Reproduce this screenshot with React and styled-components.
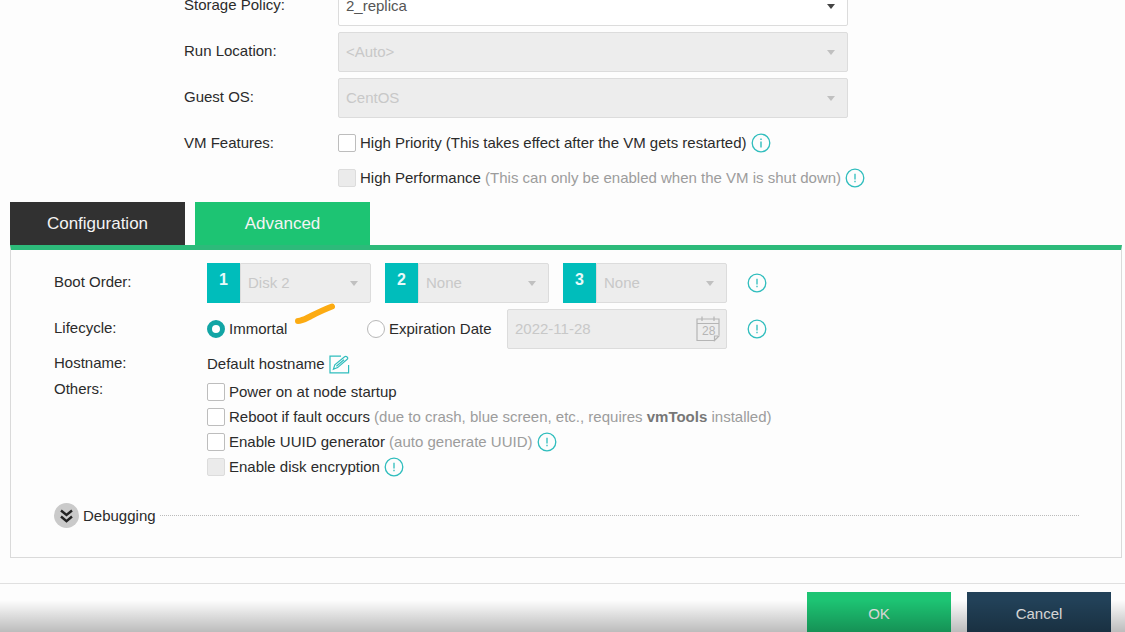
import React, { useState } from 'react';
import styled, { createGlobalStyle } from 'styled-components';

const GlobalStyle = createGlobalStyle`
  * {
    box-sizing: border-box;
  }
  body {
    margin: 0;
    background: #fdfdfd;
    color: #2b2b2b;
    font-family: "Liberation Sans", Arial, sans-serif;
    font-size: 15px;
    line-height: 20px;
  }
  button, input, select {
    font: inherit;
  }
`;

const Dialog = styled.div`
  position: relative;
  height: 100vh;
  overflow: hidden;
`;

const General = styled.section`
  display: flex;
  flex-direction: column;
  gap: 6px;
  margin-top: -14px;
  padding: 0 277px 7px 184px;
`;

const Row = styled.div`
  display: grid;
  grid-template-columns: ${({ $inner }) => ($inner ? '153px' : '154px')} 1fr;
  align-items: ${({ $top }) => ($top ? 'start' : 'center')};
  min-height: ${({ $compact }) => ($compact ? '25px' : '40px')};
`;

const RowLabel = styled.label`
  padding-bottom: 2px;
  line-height: ${({ $compact }) => ($compact ? '24px' : '38px')};
`;

const SelectBox = styled.div`
  position: relative;
  flex: 1;
  min-width: 0;
  color: ${({ $off }) => ($off ? '#c0c0c0' : '#444')};
  select {
    appearance: none;
    display: block;
    width: 100%;
    height: 40px;
    padding: 0 30px 0 7px;
    border: 1px solid #dcdcdc;
    border-radius: ${({ $joined }) => ($joined ? '0 2px 2px 0' : '2px')};
    background: ${({ $off }) => ($off ? '#ededed' : '#fff')};
    color: ${({ $off }) => ($off ? '#c8c8c8' : '#555')};
    opacity: 1;
  }
  &::after {
    content: '';
    position: absolute;
    right: 13px;
    top: 18px;
    border: 4px solid transparent;
    border-top: 5px solid currentColor;
    border-bottom: 0;
    pointer-events: none;
  }
`;

const Features = styled.div`
  padding-top: ${({ $flush }) => ($flush ? '2px' : '1px')};
`;

const CheckRow = styled.div`
  display: flex;
  align-items: center;
  gap: 4px;
  height: ${({ $tall }) => ($tall ? '35px' : '25px')};
  white-space: nowrap;
  label {
    display: flex;
    align-items: center;
    gap: 4px;
  }
`;

const Checkbox = styled.input`
  appearance: none;
  width: 18px;
  height: 18px;
  margin: 0;
  border: 1px solid #bdbdbd;
  border-radius: 2px;
  background: #fff;
  &:checked {
    background: #12a5a5;
  }
  &:disabled {
    border-color: #dcdcdc;
    background: #ebebeb;
  }
`;

const Note = styled.span`
  color: #9c9c9c;
  b {
    color: #777;
  }
`;

const IconButton = styled.button`
  display: flex;
  padding: 0;
  border: 0;
  background: none;
  color: #2fbdbd;
  cursor: pointer;
`;

const TabBar = styled.div`
  display: flex;
  gap: 10px;
  margin: 0 3px 0 10px;
`;

const Tab = styled.button`
  width: 175px;
  height: 43px;
  padding: 0;
  border: 0;
  background: ${({ $active }) => ($active ? '#1dc473' : '#313131')};
  color: #f4f4f4;
  font-size: 17px;
`;

const Panel = styled.section`
  margin: 0 3px 0 10px;
  padding: 13px 42px 29px 43px;
  border: 1px solid #dadada;
  border-top: 5px solid #2dba7a;
`;

const Fields = styled.div`
  display: flex;
  flex-direction: column;
  gap: 6px;
  margin-bottom: 2px;
`;

const Inline = styled.div`
  display: flex;
  align-items: center;
  gap: ${({ $gap }) => $gap || 0}px;
`;

const BootItem = styled.div`
  display: flex;
  width: 164px;
  height: 40px;
`;

const BootNumber = styled.label`
  width: 33px;
  background: #00bdbb;
  color: #e8fafa;
  font-size: 16px;
  font-weight: bold;
  line-height: 34px;
  text-align: center;
`;

const HintSlot = styled.div`
  display: flex;
  padding-left: 20px;
`;

const RadioLabel = styled.label`
  display: flex;
  align-items: center;
  gap: 4px;
  width: ${({ $wide }) => ($wide ? '160px' : '140px')};
  white-space: nowrap;
`;

const Radio = styled.input`
  appearance: none;
  width: 18px;
  height: 18px;
  margin: 0;
  border: 1px solid #b8b8b8;
  border-radius: 50%;
  background: #fff;
  &:checked {
    border: 5px solid #12a5a5;
  }
`;

const DateBox = styled.div`
  display: flex;
  align-items: center;
  width: 220px;
  height: 40px;
  padding: 0 6px 0 7px;
  border: 1px solid #dcdcdc;
  border-radius: 2px;
  background: #ededed;
  color: #b5b5b5;
  input {
    flex: 1;
    min-width: 0;
    padding: 0;
    border: 0;
    background: none;
    color: #c8c8c8;
  }
`;

const Debugging = styled.div`
  display: flex;
  align-items: center;
  margin-top: 24px;
  &::after {
    content: '';
    flex: 1;
    margin-left: 4px;
    border-top: 1px dotted #bbb;
  }
`;

const DebugToggle = styled.button`
  display: flex;
  align-items: center;
  gap: 4px;
  padding: 0;
  border: 0;
  background: none;
  color: inherit;
`;

const Footer = styled.footer`
  display: flex;
  justify-content: flex-end;
  gap: 16px;
  margin-top: 25px;
  padding: 8px 14px;
  border-top: 1px solid #e0e0e0;
`;

const Action = styled.button`
  width: 144px;
  height: 44px;
  border: 0;
  background: ${({ $primary }) => ($primary ? '#1dc473' : '#224158')};
  color: #f0f0f0;
`;

const Shade = styled.div`
  position: absolute;
  right: 0;
  bottom: 0;
  left: 0;
  height: 32px;
  background: linear-gradient(rgba(0, 0, 0, 0), rgba(0, 0, 0, 0.26));
  pointer-events: none;
`;

const Marker = styled.svg`
  position: absolute;
  top: -14px;
  left: 86px;
  pointer-events: none;
`;

const Anchor = styled.div`
  position: relative;
`;

const Hint = ({ info }) => (
  <IconButton type="button" aria-label={info ? 'Information' : 'Notice'}>
    <svg width="20" height="20" viewBox="0 0 20 20" fill="none" stroke="currentColor">
      <circle cx="10" cy="10" r="8.8" strokeWidth="1.3" />
      {info ? (
        <path d="M10 8.4v6M10 5.6v1.5" strokeWidth="1.4" />
      ) : (
        <path d="M10 5.8v5.6M10 12.8v1.5" strokeWidth="1.3" />
      )}
    </svg>
  </IconButton>
);

const EditIcon = () => (
  <svg width="21" height="19" viewBox="0 0 21 19" fill="none" stroke="currentColor" strokeWidth="1.2">
    <path d="M12 1.2H1v16.6h18.6V10" />
    <path d="M4.4 14.2l1.4-4.4L15.6 1.8c.9-.7 1.7-.5 2.5.2s.9 1.6.1 2.3L8.6 12.6zM7.4 11.2l7.6-6.4" />
  </svg>
);

const CalendarIcon = () => (
  <svg width="24" height="26" viewBox="0 0 24 26" fill="none" stroke="currentColor" strokeWidth="1.2">
    <path d="M23 19V3H1v21.5h17.5M1 7.5h22M6 .5V5M18 .5V5M18.5 24.5V20H23zM18.5 24.5L23 20" />
    <text x="6" y="19" fill="currentColor" stroke="none" fontSize="12">28</text>
  </svg>
);

const ChevronsIcon = () => (
  <svg width="25" height="25" viewBox="0 0 25 25" fill="none" stroke="#222" strokeWidth="2.4">
    <circle cx="12.5" cy="12.5" r="12.5" fill="#cacaca" stroke="none" />
    <path d="M7 7.5l5.5 4.5L18 7.5M7 13.5l5.5 4.7L18 13.5" />
  </svg>
);

const Dropdown = ({ id, value, off, joined }) => (
  <SelectBox $off={off} $joined={joined}>
    <select id={id} disabled={off} defaultValue={value}>
      <option>{value}</option>
    </select>
  </SelectBox>
);

const Check = ({ label, note, disabled, tall, children }) => (
  <CheckRow $tall={tall}>
    <label>
      <Checkbox type="checkbox" disabled={disabled} />
      <span>{label}{note && <Note> {note}</Note>}</span>
    </label>
    {children}
  </CheckRow>
);

const general = [
  { id: 'storage', label: 'Storage Policy:', value: '2_replica' },
  { id: 'location', label: 'Run Location:', value: '<Auto>', off: true },
  { id: 'guest', label: 'Guest OS:', value: 'CentOS', off: true },
];

const bootOrder = ['Disk 2', 'None', 'None'];

const App = () => {
  const [lifecycle, setLifecycle] = useState('immortal');

  return (
    <Dialog>
      <GlobalStyle />
      <General>
        {general.map(({ id, label, value, off }) => (
          <Row key={id}>
            <RowLabel htmlFor={id}>{label}</RowLabel>
            <Dropdown id={id} value={value} off={off} />
          </Row>
        ))}
        <Row $top>
          <RowLabel as="span">VM Features:</RowLabel>
          <Features>
            <Check tall label="High Priority (This takes effect after the VM gets restarted)">
              <Hint info />
            </Check>
            <Check tall disabled label="High Performance" note="(This can only be enabled when the VM is shut down)">
              <Hint />
            </Check>
          </Features>
        </Row>
      </General>

      <TabBar role="tablist">
        <Tab type="button" role="tab" aria-selected="false">Configuration</Tab>
        <Tab type="button" role="tab" aria-selected="true" $active>Advanced</Tab>
      </TabBar>
      <Panel>
        <Fields>
          <Row $inner>
            <RowLabel as="span">Boot Order:</RowLabel>
            <Inline>
              <Inline $gap={14}>
                {bootOrder.map((device, i) => (
                  <BootItem key={i}>
                    <BootNumber htmlFor={`boot${i}`}>{i + 1}</BootNumber>
                    <Dropdown id={`boot${i}`} value={device} off joined />
                  </BootItem>
                ))}
              </Inline>
              <HintSlot><Hint /></HintSlot>
            </Inline>
          </Row>
          <Row $inner>
            <RowLabel as="span">Lifecycle:</RowLabel>
            <Anchor>
              <Inline>
                <RadioLabel $wide>
                  <Radio
                    type="radio"
                    name="lifecycle"
                    checked={lifecycle === 'immortal'}
                    onChange={() => setLifecycle('immortal')}
                  />
                  Immortal
                </RadioLabel>
                <RadioLabel>
                  <Radio
                    type="radio"
                    name="lifecycle"
                    checked={lifecycle === 'expires'}
                    onChange={() => setLifecycle('expires')}
                  />
                  Expiration Date
                </RadioLabel>
                <DateBox>
                  <input type="text" aria-label="Expiration Date" defaultValue="2022-11-28" disabled />
                  <CalendarIcon />
                </DateBox>
                <HintSlot><Hint /></HintSlot>
              </Inline>
              <Marker width="44" height="32" viewBox="0 0 44 32" fill="none">
                <path d="M5 26c4 0 7-2 13-5s13-6.500 21-9.500" stroke="#fcab12" strokeWidth="6" strokeLinecap="round" />
              </Marker>
            </Anchor>
          </Row>
        </Fields>
        <Row $inner $compact>
          <RowLabel as="span" $compact>Hostname:</RowLabel>
          <Inline $gap={4}>
            Default hostname
            <IconButton type="button" aria-label="Edit hostname"><EditIcon /></IconButton>
          </Inline>
        </Row>
        <Row $inner $compact $top>
          <RowLabel as="span" $compact>Others:</RowLabel>
          <Features $flush>
            <Check label="Power on at node startup" />
            <Check
              label="Reboot if fault occurs"
              note={<>(due to crash, blue screen, etc., requires <b>vmTools</b> installed)</>}
            />
            <Check label="Enable UUID generator" note="(auto generate UUID)"><Hint /></Check>
            <Check disabled label="Enable disk encryption"><Hint /></Check>
          </Features>
        </Row>
        <Debugging>
          <DebugToggle type="button"><ChevronsIcon />Debugging</DebugToggle>
        </Debugging>
      </Panel>

      <Footer>
        <Action type="button" $primary>OK</Action>
        <Action type="button">Cancel</Action>
      </Footer>
      <Shade />
    </Dialog>
  );
};

export default App;
